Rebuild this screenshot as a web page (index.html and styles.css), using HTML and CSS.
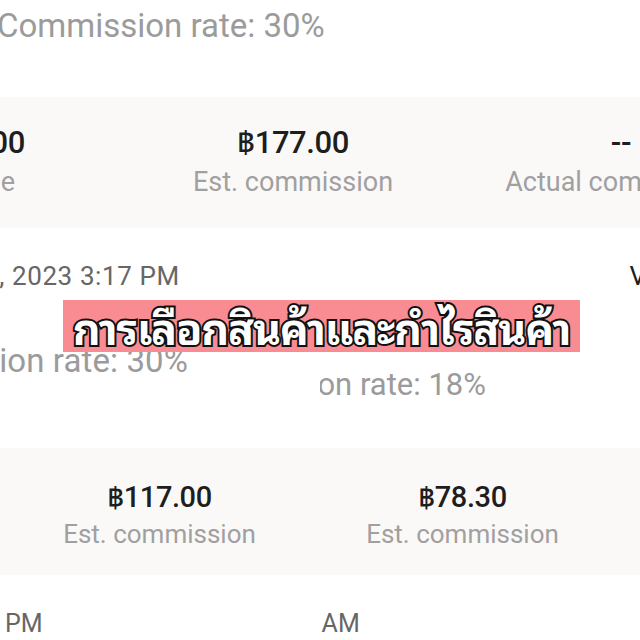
FILE: index.html
```html
<!DOCTYPE html>
<html lang="th">
<head>
<meta charset="utf-8">
<title>Commission</title>
<link rel="stylesheet" href="styles.css">
</head>
<body>
<div class="page">
  <div class="rate rate-top">Commission rate: 30%</div>

  <div class="band band-top">
    <div class="stat col-a">
      <div class="value">฿590.00</div>
      <div class="label">Price</div>
    </div>
    <div class="stat col-b">
      <div class="value">฿177.00</div>
      <div class="label">Est. commission</div>
    </div>
    <div class="stat col-c">
      <div class="value">--</div>
      <div class="label">Actual commission</div>
    </div>
  </div>

  <div class="date-row">
    <span class="date">1, 2023 3:17 PM</span>
    <span class="action">View</span>
  </div>

  <div class="rate-row">
    <div class="clip clip-a"><span class="rate">Commission rate: 30%</span></div>
    <div class="clip clip-b"><span class="rate">Commission rate: 18%</span></div>
  </div>

  <div class="band band-bottom">
    <div class="stat col-d">
      <div class="value">฿117.00</div>
      <div class="label">Est. commission</div>
    </div>
    <div class="stat col-e">
      <div class="value">฿78.30</div>
      <div class="label">Est. commission</div>
    </div>
  </div>

  <div class="time-row">
    <span class="time time-a">PM</span>
    <span class="time time-b">AM</span>
  </div>

  <div class="caption"><span class="caption-text">การเลือกสินค้าและกำไรสินค้า</span></div>
</div>
</body>
</html>
```

FILE: styles.css
```css
* { box-sizing: border-box; }
html, body { margin: 0; padding: 0; background: #ffffff; }
.page {
  position: relative;
  width: 640px;
  height: 640px;
  overflow: hidden;
  background: #ffffff;
  font-family: Roboto, "Noto Sans", "Noto Sans Thai", sans-serif;
}
.rate {
  color: #9b9b9b;
  white-space: nowrap;
}
.rate-top {
  font-size: 33px;
  line-height: 40px;
  height: 40px;
  margin: 6px 0 0 -3px;
}
.band {
  display: flex;
  background: #fbf9f8;
  white-space: nowrap;
}
.band-top {
  margin-top: 51px;
  height: 131px;
  padding-top: 28px;
  margin-left: -199px;
}
.stat {
  display: flex;
  flex-direction: column;
  align-items: center;
  flex: none;
}
.band-top .stat { width: 328px; }
.band-top .col-a { align-items: flex-end; padding-right: 104px; }
.band-top .col-a .label { margin-right: 10px; }
.value {
  color: #1e1e1e;
  font-size: 31px;
  line-height: 36px;
  font-weight: 500;
  letter-spacing: -0.4px;
}
.label {
  color: #a0a0a0;
  font-size: 27px;
  line-height: 34px;
  margin-top: 4px;
}
.date-row {
  display: flex;
  justify-content: space-between;
  margin-top: 33px;
  height: 30px;
  font-size: 26px;
  line-height: 30px;
  white-space: nowrap;
  letter-spacing: 0.6px;
}
.date {
  color: #666666;
  margin-left: -16px;
}
.action {
  color: #1e1e1e;
  margin-right: -48px;
}
.rate-row {
  display: flex;
  align-items: flex-start;
  height: 110px;
  line-height: 30px;
}
.clip {
  display: flex;
  justify-content: flex-end;
  overflow: hidden;
  flex: none;
}
.clip-a { width: 188px; margin-top: 55px; font-size: 33px; letter-spacing: 0.1px; }
.clip-b { width: 166px; margin-left: 132px; margin-top: 79px; font-size: 31px; }
.band-bottom {
  margin-top: 47px;
  height: 127px;
  padding: 32px 0 0 8px;
}
.band-bottom .stat { width: 303px; }
.band-bottom .value { font-size: 29px; line-height: 34px; }
.band-bottom .label { font-size: 26px; line-height: 32px; }
.time-row {
  font-size: 25px;
  line-height: 30px;
  height: 30px;
  color: #666666;
  margin-top: 34px;
  white-space: nowrap;
  display: flex;
}
.time-a { margin-left: 5px; }
.time-b { margin-left: 279px; }
.caption {
  position: absolute;
  left: 63px;
  top: 300px;
  width: 517px;
  height: 52px;
  background: #f98b93;
  display: flex;
  justify-content: center;
  align-items: center;
  white-space: nowrap;
}
.caption-text {
  color: #ffffff;
  font-family: "Noto Sans Thai Looped", "Noto Sans Thai", "Noto Serif Thai", Loma, Garuda, sans-serif;
  font-weight: 700;
  font-size: 43px;
  line-height: 52px;
  letter-spacing: -1.2px;
  -webkit-text-stroke: 4px #111111;
  paint-order: stroke fill;
}
```
